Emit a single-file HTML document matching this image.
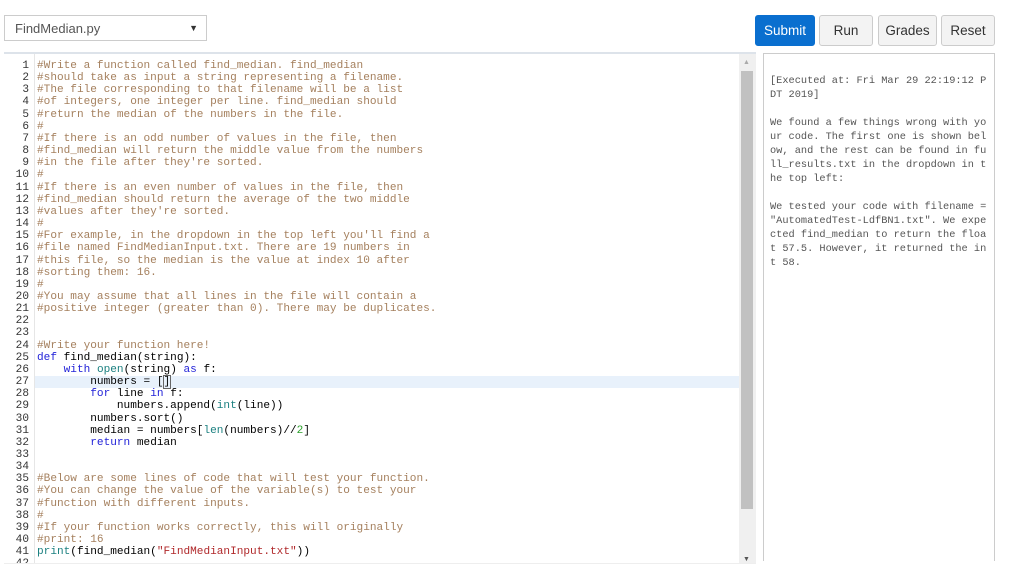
<!DOCTYPE html>
<html><head><meta charset="utf-8"><style>
body{margin:0;width:1024px;height:573px;background:#fff;position:relative;overflow:hidden;font-family:"Liberation Sans",sans-serif}
.sel{position:absolute;left:4px;top:15px;width:203px;height:26px;border:1px solid #ccc;box-sizing:border-box;font-size:13px;color:#555;padding:5px 10px}
.sel span{position:absolute;right:8px;top:7px;font-size:9px;color:#333}
.btn{position:absolute;top:15px;height:31px;box-sizing:border-box;border:1px solid #ccc;border-radius:3px;background:#f3f3f3;color:#333;font-size:13.5px;text-align:center;line-height:29px}
.ed{position:absolute;left:4px;top:52px;width:752px;height:509px;border-top:2px solid #dde3ea;border-bottom:1px solid #eee;overflow:hidden}
.gut{position:absolute;left:0;top:0;width:30px;height:100%;border-right:1px solid #e6e6e6}
pre{margin:0;font-family:"Liberation Mono",monospace}
.code{position:absolute;left:0;top:6px;font-size:11.1px;line-height:12.15px;color:#000}
.ln{display:inline-block;width:25px;text-align:right;color:#333;margin-right:8px}
.c{color:#a5805e}.k{color:#2323d8}.b{color:#1b8080}.s{color:#b0282a}.n{color:#2aa02a}
.hl{position:absolute;left:31px;top:322px;width:705px;height:12px;background:#e8f1fb}
.sb{position:absolute;left:735px;top:0;width:17px;height:100%;background:#f0f0f0}
.th{position:absolute;left:2px;top:17px;width:12px;height:438px;background:#c1c1c1}
.out{position:absolute;left:763px;top:53px;width:232px;height:508px;border:1px solid #ccc;border-bottom:none;box-sizing:border-box}
.out pre{font-size:10.3px;line-height:14px;color:#555;padding:20px 0 0 6px}
</style></head><body>
<div class="sel">FindMedian.py<span>▼</span></div>
<div class="btn" style="left:755px;width:60px;background:#0a6fcf;border-color:#0a6fcf;color:#fff">Submit</div>
<div class="btn" style="left:819px;width:54px">Run</div>
<div class="btn" style="left:878px;width:59px">Grades</div>
<div class="btn" style="left:941px;width:54px">Reset</div>
<div class="ed">
<div class="hl"></div>
<div class="gut"></div>
<pre class="code"><span class="ln">1</span><span class="c">#Write a function called find_median. find_median</span>
<span class="ln">2</span><span class="c">#should take as input a string representing a filename.</span>
<span class="ln">3</span><span class="c">#The file corresponding to that filename will be a list</span>
<span class="ln">4</span><span class="c">#of integers, one integer per line. find_median should</span>
<span class="ln">5</span><span class="c">#return the median of the numbers in the file.</span>
<span class="ln">6</span><span class="c">#</span>
<span class="ln">7</span><span class="c">#If there is an odd number of values in the file, then</span>
<span class="ln">8</span><span class="c">#find_median will return the middle value from the numbers</span>
<span class="ln">9</span><span class="c">#in the file after they're sorted.</span>
<span class="ln">10</span><span class="c">#</span>
<span class="ln">11</span><span class="c">#If there is an even number of values in the file, then</span>
<span class="ln">12</span><span class="c">#find_median should return the average of the two middle</span>
<span class="ln">13</span><span class="c">#values after they're sorted.</span>
<span class="ln">14</span><span class="c">#</span>
<span class="ln">15</span><span class="c">#For example, in the dropdown in the top left you'll find a</span>
<span class="ln">16</span><span class="c">#file named FindMedianInput.txt. There are 19 numbers in</span>
<span class="ln">17</span><span class="c">#this file, so the median is the value at index 10 after</span>
<span class="ln">18</span><span class="c">#sorting them: 16.</span>
<span class="ln">19</span><span class="c">#</span>
<span class="ln">20</span><span class="c">#You may assume that all lines in the file will contain a</span>
<span class="ln">21</span><span class="c">#positive integer (greater than 0). There may be duplicates.</span>
<span class="ln">22</span>
<span class="ln">23</span>
<span class="ln">24</span><span class="c">#Write your function here!</span>
<span class="ln">25</span><span class="k">def</span> find_median(string):
<span class="ln">26</span>    <span class="k">with</span> <span class="b">open</span>(string) <span class="k">as</span> f:
<span class="ln">27</span>        numbers = [<span style="outline:1px solid #666">]</span>
<span class="ln">28</span>        <span class="k">for</span> line <span class="k">in</span> f:
<span class="ln">29</span>            numbers.append(<span class="b">int</span>(line))
<span class="ln">30</span>        numbers.sort()
<span class="ln">31</span>        median = numbers[<span class="b">len</span>(numbers)//<span class="n">2</span>]
<span class="ln">32</span>        <span class="k">return</span> median
<span class="ln">33</span>
<span class="ln">34</span>
<span class="ln">35</span><span class="c">#Below are some lines of code that will test your function.</span>
<span class="ln">36</span><span class="c">#You can change the value of the variable(s) to test your</span>
<span class="ln">37</span><span class="c">#function with different inputs.</span>
<span class="ln">38</span><span class="c">#</span>
<span class="ln">39</span><span class="c">#If your function works correctly, this will originally</span>
<span class="ln">40</span><span class="c">#print: 16</span>
<span class="ln">41</span><span class="b">print</span>(find_median(<span class="s">"FindMedianInput.txt"</span>))
<span class="ln">42</span></pre>
<div class="sb"><div style="position:absolute;left:4px;top:5px;font-size:7px;color:#aaa">▲</div><div class="th"></div><div style="position:absolute;left:4px;bottom:0px;font-size:7px;color:#555">▼</div></div>
</div>
<div class="out"><pre>[Executed at: Fri Mar 29 22:19:12 P
DT 2019]

We found a few things wrong with yo
ur code. The first one is shown bel
ow, and the rest can be found in fu
ll_results.txt in the dropdown in t
he top left:

We tested your code with filename =
"AutomatedTest-LdfBN1.txt". We expe
cted find_median to return the floa
t 57.5. However, it returned the in
t 58.</pre></div>
</body></html>
